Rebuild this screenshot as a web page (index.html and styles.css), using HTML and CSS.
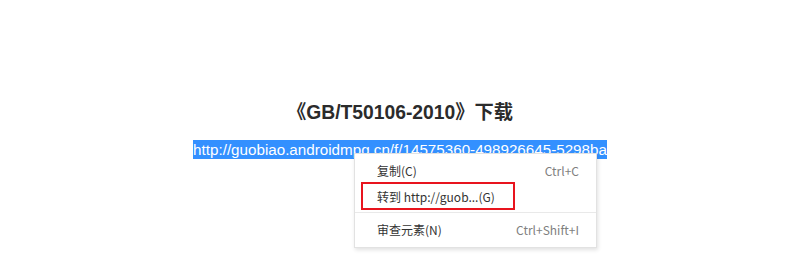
FILE: index.html
```html
<!DOCTYPE html>
<html lang="zh">
<head>
<meta charset="utf-8">
<link rel="stylesheet" href="styles.css">
</head>
<body>
<div class="page">
  <h2 class="title">《GB/T50106-2010》下载</h2>
  <p class="link"><span class="sel">http://guobiao.androidmpg.cn/f/14575360-498926645-5298ba</span></p>
</div>
<div class="menu">
  <div class="item"><span>复制(C)</span><span class="key">Ctrl+C</span></div>
  <div class="item"><span>转到 http://guob...(G)</span></div>
  <div class="sep"></div>
  <div class="item"><span>审查元素(N)</span><span class="key">Ctrl+Shift+I</span></div>
</div>
<div class="mark"></div>
</body>
</html>
```

FILE: styles.css
```css
html, body {
  margin: 0;
  padding: 0;
  background: #fff;
  width: 800px;
  height: 280px;
  overflow: hidden;
}
body {
  font-family: "Liberation Sans", Arial, "Noto Sans CJK SC", sans-serif;
  color: #333;
}
.page {
  padding-top: 101px;
  display: flex;
  flex-direction: column;
  align-items: center;
}
.title {
  margin: 0;
  font-size: 19.3px;
  line-height: 24px;
  font-weight: bold;
  color: #2b2b2b;
}
.link {
  margin: 16px 0 0;
  font-size: 15.2px;
  line-height: 18px;
}
.sel {
  background: #3390ff;
  color: #fff;
  padding: 1px 0;
}
.menu {
  position: absolute;
  left: 354px;
  top: 153px;
  width: 241px;
  padding: 3px 0 5px;
  background: #fff;
  border: 1px solid #e2e2e2;
  box-shadow: 1px 2px 4px rgba(0,0,0,0.12);
  font-family: "Noto Sans CJK SC", "Liberation Sans", sans-serif;
  font-size: 12px;
  color: #333;
}
.item {
  height: 26px;
  display: flex;
  align-items: center;
  justify-content: space-between;
  padding: 0 17px 0 22px;
}
.key {
  color: #808080;
}
.sep {
  height: 1px;
  background: #e9e9e9;
  margin: 3px 0;
}
.mark {
  position: absolute;
  left: 361px;
  top: 182px;
  width: 150px;
  height: 24px;
  border: 2px solid #e8141e;
}
```
